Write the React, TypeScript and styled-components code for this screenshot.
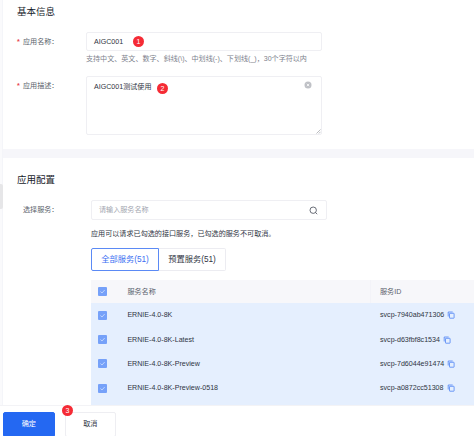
import React from "react";
import styled, { createGlobalStyle } from "styled-components";

const GlobalStyle = createGlobalStyle`
  * { box-sizing: border-box; }
  body {
    margin: 0;
    overflow: hidden;
    background: #fff;
    color: #2f3543;
    font: 7.1px/12px "Liberation Sans", "Noto Sans CJK SC", sans-serif;
  }
`;

const Page = styled.div`
  display: flex;
  flex-direction: column;
  width: 474px;
  height: 436px;
  overflow: hidden;
`;

const Main = styled.div`
  display: flex;
  height: 405px;
  flex: none;
`;

const Rail = styled.div`
  width: 3px;
  flex: none;
  background: #fafafc;
  border-right: 1px solid #f4f5f9;
  padding-top: 184px;
`;

const RailHandle = styled.div`
  width: 3px;
  height: 25px;
  border-radius: 0 2px 2px 0;
  background: #e6e6e8;
`;

const Content = styled.div`
  flex: 1;
  min-width: 0;
  overflow: hidden;
`;

const Section = styled.section<{ $height: number; $gap: number }>`
  height: ${(p) => p.$height}px;
  padding: ${(p) => p.$gap}px 0 0 14px;
  background: #fff;
`;

const Band = styled.div`
  height: 9px;
  background: #f6f6fa;
`;

const Title = styled.h2`
  margin: 0;
  height: 14px;
  font-size: 9.5px;
  line-height: 14px;
  font-weight: 400;
  color: #151a29;
`;

const Field = styled.div<{ $top: number; $labelWidth: number }>`
  display: grid;
  grid-template-columns: ${(p) => p.$labelWidth}px 1fr;
  margin-top: ${(p) => p.$top}px;
`;

const Label = styled.label<{ $required?: boolean }>`
  display: flex;
  align-items: center;
  height: 19px;
  color: #5a5f6b;
  &::before {
    content: "${(p) => (p.$required ? "*" : "")}";
    width: 6px;
    height: 9px;
    line-height: 11px;
    color: #e8434a;
    font-weight: 700;
  }
`;

const Box = styled.div<{ $height: number }>`
  position: relative;
  display: flex;
  align-items: center;
  justify-content: space-between;
  width: 236px;
  height: ${(p) => p.$height}px;
  padding: 0 8px 0 7px;
  border: 1px solid #efeff3;
  border-radius: 2px;
`;

const TextArea = styled(Box)`
  align-items: flex-start;
  padding: 4px 9px 0 7px;
`;

const Hint = styled.div`
  margin-top: 2px;
  font-size: 7.07px;
  color: #7e828d;
`;

const Placeholder = styled.span`
  color: #a3a6b0;
`;

const Note = styled.div`
  margin-top: 8px;
`;

const Badge = styled.span<{ $x: number; $y: number }>`
  position: absolute;
  left: ${(p) => p.$x}px;
  top: ${(p) => p.$y}px;
  width: 11px;
  height: 11px;
  border-radius: 50%;
  background: #f52b35;
  color: #fff;
  font-size: 7px;
  line-height: 11px;
  text-align: center;
`;

const Grip = styled.svg`
  position: absolute;
  right: 0;
  bottom: 0;
`;

const Tabs = styled.div`
  display: flex;
  margin-top: 8px;
`;

const Tab = styled.button<{ $active?: boolean }>`
  width: ${(p) => (p.$active ? 68 : 67)}px;
  height: 23px;
  padding: 0;
  border: 1px solid ${(p) => (p.$active ? "#5b8af5" : "#ececf1")};
  border-left-width: ${(p) => (p.$active ? 1 : 0)}px;
  border-radius: ${(p) => (p.$active ? "2px 0 0 2px" : "0 2px 2px 0")};
  background: #fff;
  color: ${(p) => (p.$active ? "#3b70f2" : "#2f3543")};
  font: 8.25px/20px "Liberation Sans", "Noto Sans CJK SC", sans-serif;
`;

const Table = styled.div`
  margin-top: 9px;
`;

const Row = styled.div<{ $head?: boolean }>`
  display: grid;
  grid-template-columns: 36px 243px 1fr;
  align-items: center;
  height: ${(p) => (p.$head ? 23.4 : 24.2)}px;
  background: ${(p) => (p.$head ? "#f7f7fa" : "#e5effe")};
  color: ${(p) => (p.$head ? "#5a5f6b" : "#2f3543")};
`;

const Cell = styled.div<{ $divided?: boolean }>`
  display: flex;
  align-items: center;
  height: 100%;
  padding-left: ${(p) => (p.$divided ? 9 : 0.4)}px;
  border-left: ${(p) => (p.$divided ? "1px solid #f3f3f8" : "0")};
`;

const IdCell = styled.div`
  display: flex;
  align-items: center;
  gap: 3px;
  padding-left: 10px;
`;

const Check = styled.span`
  display: flex;
  align-items: center;
  justify-content: center;
  width: 9px;
  height: 9px;
  margin-left: 7px;
  border-radius: 1px;
  background: #76a1f9;
`;

const Footer = styled.footer`
  position: relative;
  display: flex;
  gap: 10px;
  flex: 1;
  padding: 6px 0 0 3px;
  border-top: 1px solid #f3f3f6;
  background: #fff;
`;

const Button = styled.button<{ $primary?: boolean }>`
  width: 51.5px;
  height: 25px;
  padding: 0;
  border: 1px solid ${(p) => (p.$primary ? "#2468f2" : "#eeeef2")};
  border-radius: 2px;
  background: ${(p) => (p.$primary ? "#2468f2" : "#fff")};
  color: ${(p) => (p.$primary ? "#fff" : "#2f3543")};
  font: 7.1px/21px "Liberation Sans", "Noto Sans CJK SC", sans-serif;
`;

const Checkbox = () => (
  <Check>
    <svg width="7" height="7" viewBox="0 0 7 7" fill="none" stroke="#dbe8ff" strokeWidth="0.7">
      <path d="M1.4 3.5 3 5l2.7-3" />
    </svg>
  </Check>
);

const CopyIcon = () => (
  <svg width="8" height="8" viewBox="0 0 8 8" fill="none" stroke="#4e83f5" strokeWidth="0.8">
    <rect x="2.5" y="2.3" width="4.6" height="4.9" rx="0.4" />
    <path d="M1.2 5.5V1H5.7" />
  </svg>
);

const ClearIcon = () => (
  <svg width="8" height="8" viewBox="0 0 8 8">
    <circle cx="4" cy="4" r="3.5" fill="#bfc1c6" />
    <path d="m2.8 2.8 2.4 2.4m0-2.4L2.8 5.2" stroke="#fff" strokeWidth="0.8" />
  </svg>
);

const SearchIcon = () => (
  <svg width="9" height="9" viewBox="0 0 9 9" fill="none" stroke="#444955" strokeWidth="0.8">
    <circle cx="4.2" cy="4.2" r="3.2" />
    <path d="m6.5 6.5 1.7 1.7" />
  </svg>
);

const services = [
  { name: "ERNIE-4.0-8K", id: "svcp-7940ab471306" },
  { name: "ERNIE-4.0-8K-Latest", id: "svcp-d63fbf8c1534" },
  { name: "ERNIE-4.0-8K-Preview", id: "svcp-7d6044e91474" },
  { name: "ERNIE-4.0-8K-Preview-0518", id: "svcp-a0872cc51308" },
];

const TableTail = styled.div`
  height: 24px;
  background: #e5effe;
`;

export default function App() {
  return (
    <Page>
      <GlobalStyle />
      <Main>
        <Rail>
          <RailHandle />
        </Rail>
        <Content>
          <Section $height={149} $gap={5}>
            <Title>基本信息</Title>
            <Field $top={13} $labelWidth={69}>
              <Label $required>应用名称：</Label>
              <div>
                <Box $height={19}>
                  AIGC001
                  <Badge $x={46} $y={3}>1</Badge>
                </Box>
                <Hint>支持中文、英文、数字、斜线(\)、中划线(-)、下划线(_)，30个字符以内</Hint>
              </div>
            </Field>
            <Field $top={11} $labelWidth={69}>
              <Label $required>应用描述：</Label>
              <TextArea $height={59}>
                AIGC001测试使用
                <Badge $x={70} $y={6}>2</Badge>
                <ClearIcon />
                <Grip width="5" height="5" viewBox="0 0 5 5" stroke="#8c8f96" strokeWidth="0.6">
                  <path d="M0.5 4.5l4-4M2.8 4.5l1.7-1.7" />
                </Grip>
              </TextArea>
            </Field>
          </Section>
          <Band />
          <Section $height={247} $gap={15}>
            <Title>应用配置</Title>
            <Field $top={13} $labelWidth={74}>
              <Label>选择服务：</Label>
              <div>
                <Box $height={20}>
                  <Placeholder>请输入服务名称</Placeholder>
                  <SearchIcon />
                </Box>
                <Note>应用可以请求已勾选的接口服务，已勾选的服务不可取消。</Note>
                <Tabs>
                  <Tab $active>全部服务(51)</Tab>
                  <Tab>预置服务(51)</Tab>
                </Tabs>
                <Table>
                  <Row $head>
                    <Checkbox />
                    <Cell>服务名称</Cell>
                    <Cell $divided>服务ID</Cell>
                  </Row>
                  {services.map((s) => (
                    <Row key={s.id}>
                      <Checkbox />
                      <Cell>{s.name}</Cell>
                      <IdCell>
                        {s.id}
                        <CopyIcon />
                      </IdCell>
                    </Row>
                  ))}
                  <TableTail />
                </Table>
              </div>
            </Field>
          </Section>
        </Content>
      </Main>
      <Footer>
        <Button $primary>确定</Button>
        <Button>取消</Button>
        <Badge $x={62} $y={-1}>3</Badge>
      </Footer>
    </Page>
  );
}
